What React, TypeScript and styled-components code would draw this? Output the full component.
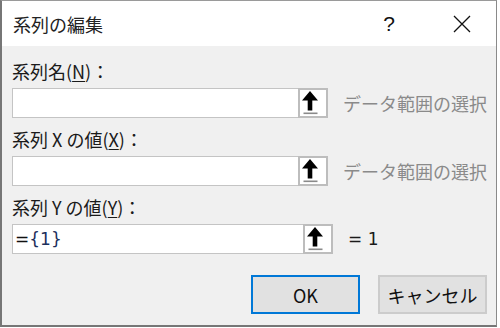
import React from "react";
import styled, { createGlobalStyle } from "styled-components";

const Global = createGlobalStyle`
  html, body { margin: 0; padding: 0; background: #ffffff; }
  body { font-family: "Noto Sans CJK JP", "Noto Sans", sans-serif; }
`;

const Window = styled.div`
  box-sizing: border-box;
  width: 497px;
  height: 327px;
  border-left: 2px solid #767676;
  border-right: 1px solid #8a8a8a;
  border-top: 1px solid #9a9a9a;
  border-bottom: 2px solid #767676;
  background: #f0f0f0;
  display: flex;
  flex-direction: column;
  font-family: "Noto Sans CJK JP", "Noto Sans", sans-serif;
  color: #1a1a1a;
`;

const TitleBar = styled.div`
  height: 45px;
  background: #ffffff;
  display: flex;
  align-items: center;
  padding-left: 11px;
`;

const Title = styled.div`
  flex: 1;
  font-size: 18px;
  line-height: 24px;
  color: #222;
`;

const TitleButton = styled.div<{ $mr?: number }>`
  width: 46px;
  height: 45px;
  display: flex;
  align-items: center;
  justify-content: center;
  margin-right: ${(p) => p.$mr ?? 0}px;
  font-family: "Liberation Sans", "Noto Sans", sans-serif;
  font-size: 21px;
  color: #111;
`;

const Body = styled.div`
  flex: 1;
  display: flex;
  flex-direction: column;
  padding: 12px 9px 0 10px;
`;

const Group = styled.div`
  display: flex;
  flex-direction: column;
  gap: 4px;
  margin-bottom: 8px;
`;

const Label = styled.div`
  height: 26px;
  font-size: 18px;
  line-height: 26px;
  color: #1a1a1a;
  white-space: pre;
  u { text-decoration-thickness: 1px; text-underline-offset: 2px; }
`;

const Row = styled.div`
  display: flex;
  align-items: center;
  height: 30px;
`;

const Input = styled.div`
  box-sizing: border-box;
  width: 291px;
  height: 30px;
  background: #ffffff;
  border: 1px solid #c4c4c4;
  border-right: none;
  display: flex;
  align-items: center;
  padding-left: 2px;
  font-family: "DejaVu Sans", "Noto Sans", sans-serif;
  font-size: 17px;
  line-height: 28px;
  color: #111;
`;

const Brace = styled.span`
  color: #1d2f5c;
`;

const RefButton = styled.div`
  box-sizing: border-box;
  width: 30px;
  height: 30px;
  background: #ffffff;
  border: 2px solid #bdbdbd;
  display: flex;
  align-items: center;
  justify-content: center;
`;

const Hint = styled.div<{ $dark?: boolean }>`
  margin-left: 15px;
  font-family: ${(p) =>
    p.$dark ? `"DejaVu Sans", "Noto Sans", sans-serif` : `"Noto Sans CJK JP", "Noto Sans", sans-serif`};
  font-size: ${(p) => (p.$dark ? 17 : 18)}px;
  line-height: 26px;
  color: ${(p) => (p.$dark ? "#1a1a1a" : "#8a8a8a")};
  white-space: pre;
`;

const Buttons = styled.div`
  display: flex;
  justify-content: flex-end;
  gap: 18px;
  margin-top: 13px;
`;

const Button = styled.div<{ $primary?: boolean }>`
  box-sizing: border-box;
  width: 109px;
  height: 39px;
  background: #e1e1e1;
  border: ${(p) => (p.$primary ? "2px solid #0078d7" : "2px solid #cccccc")};
  display: flex;
  align-items: center;
  justify-content: center;
  font-size: 18px;
  color: #111;
`;

const ArrowIcon = () => (
  <svg width="26" height="26" viewBox="0 0 26 26">
    <polygon points="10,1 18,10.5 12.3,10.5 12.3,20.5 7.7,20.5 7.7,10.5 2,10.5" fill="#000" />
    <rect x="3.5" y="22.5" width="14" height="1.6" fill="#8a8a8a" />
  </svg>
);

const CloseIcon = () => (
  <svg width="18" height="18" viewBox="0 0 18 18">
    <path d="M1 1 L17 17 M17 1 L1 17" stroke="#111" strokeWidth="1.3" fill="none" />
  </svg>
);

type Field = { label: React.ReactNode; value?: React.ReactNode; hint: string; dark?: boolean };

const fields: Field[] = [
  { label: <>系列名(<u>N</u>)：</>, hint: "データ範囲の選択" },
  { label: <>系列 X の値(<u>X</u>)：</>, hint: "データ範囲の選択" },
  {
    label: <>系列 Y の値(<u>Y</u>)：</>,
    value: (
      <>
        =<Brace>{"{1}"}</Brace>
      </>
    ),
    hint: "= 1",
    dark: true,
  },
];

export default function App() {
  return (
    <>
      <Global />
      <Window>
        <TitleBar>
          <Title>系列の編集</Title>
          <TitleButton $mr={27}>?</TitleButton>
          <TitleButton $mr={11}>
            <CloseIcon />
          </TitleButton>
        </TitleBar>
        <Body>
          {fields.map((f, i) => (
            <Group key={i}>
              <Label>{f.label}</Label>
              <Row>
                <Input>{f.value}</Input>
                <RefButton>
                  <ArrowIcon />
                </RefButton>
                <Hint $dark={f.dark}>{f.hint}</Hint>
              </Row>
            </Group>
          ))}
          <Buttons>
            <Button $primary>OK</Button>
            <Button>キャンセル</Button>
          </Buttons>
        </Body>
      </Window>
    </>
  );
}
